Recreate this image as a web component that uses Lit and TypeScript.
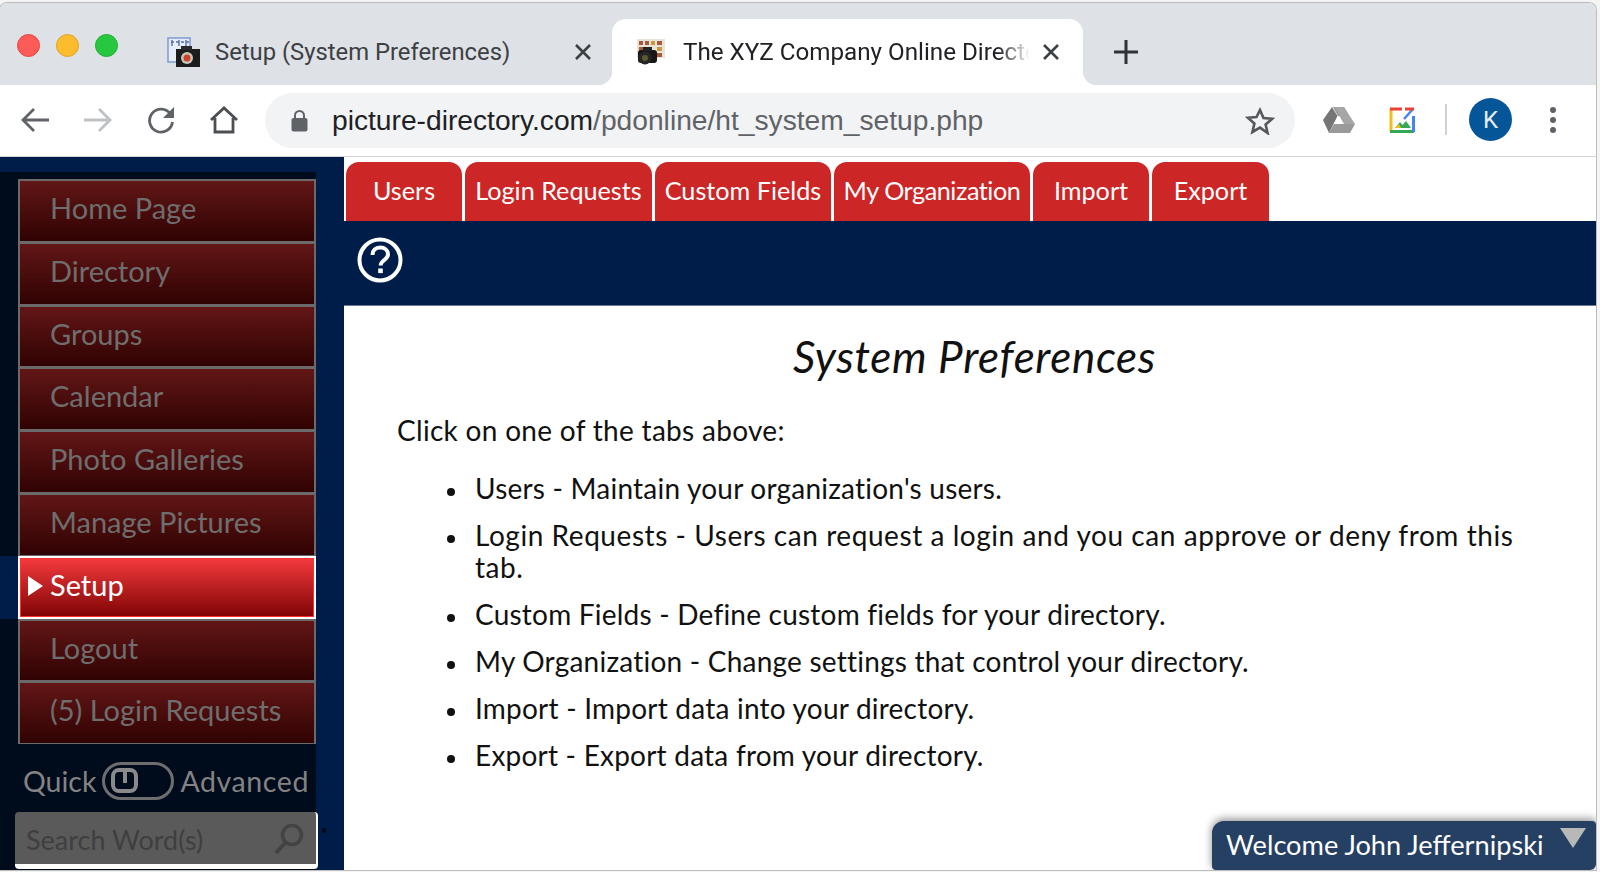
import { LitElement, html, css, svg } from "lit";
import { customElement } from "lit/decorators.js";

const NAV = ["Home Page", "Directory", "Groups", "Calendar", "Photo Galleries", "Manage Pictures", "Setup", "Logout", "(5) Login Requests"];
const TABS: [string, number][] = [["Users", 116], ["Login Requests", 187], ["Custom Fields", 176], ["My Organization", 196], ["Import", 116], ["Export", 117]];
const ITEMS: string[] = [
  "Users - Maintain your organization's users.",
  "Login Requests - Users can request a login and you can approve or deny from this tab.",
  "Custom Fields - Define custom fields for your directory.",
  "My Organization - Change settings that control your directory.",
  "Import - Import data into your directory.",
  "Export - Export data from your directory.",
];

const closeIcon = svg`<svg width="18" height="18" viewBox="0 0 18 18"><path d="M2 2L16 16M16 2L2 16" stroke="#3c4043" stroke-width="2.6"/></svg>`;

@customElement("app-root")
export class AppRoot extends LitElement {
  static styles = css`
    :host { display: block; width: 1600px; height: 872px; overflow: hidden; background: #f4f4f4; }
    .win { width: 1596px; height: 867px; margin-top: 3px; border-radius: 7px 7px 0 0; overflow: hidden; display: flex; flex-direction: column; background: #fff; box-shadow: 0 0 0 1px #bdbdbd; position: relative; }
    .strip { height: 82px; flex: none; background: #dee1e6; display: flex; align-items: flex-end; font-family: "Roboto", "Liberation Sans", sans-serif; }
    .lights { display: flex; gap: 16px; padding: 0 0 28px 17px; width: 147px; box-sizing: border-box; height: 82px; align-items: flex-end; }
    .light { width: 23px; height: 23px; border-radius: 50%; flex: none; box-sizing: border-box; }
    .r { background: #fc5b57; border: 1px solid #e5453f; }
    .y { background: #fdbc2e; border: 1px solid #e0a123; }
    .g { background: #27c840; border: 1px solid #1eae33; }
    .tab { height: 66px; box-sizing: border-box; display: flex; align-items: center; font-size: 24px; color: #3c4043; position: relative; flex: none; }
    .tab1 { width: 465px; padding: 0 0 1px 20px; font-size: 23.8px; }
    .tab1 .title { width: 359px; margin-left: 15px; }
    .tab2 { width: 471px; background: #fff; border-radius: 14px 14px 0 0; padding: 0 24px 1px 24px; color: #202124; font-size: 24.2px; }
    .tab2::before, .tab2::after { content: ""; position: absolute; bottom: 0; width: 14px; height: 14px; }
    .tab2::before { left: -14px; background: radial-gradient(circle at 0 0, transparent 14px, #fff 14.5px); }
    .tab2::after { right: -14px; background: radial-gradient(circle at 100% 0, transparent 14px, #fff 14.5px); }
    .tab2 .title { width: 350px; margin-left: 17px; overflow: hidden; white-space: nowrap; -webkit-mask-image: linear-gradient(to right, #000 90%, transparent 99%); mask-image: linear-gradient(to right, #000 90%, transparent 99%); }
    .tab2 .x { margin-left: 9px; }
    .title { white-space: nowrap; flex: none; }
    .x { display: flex; flex: none; }
    .plus { margin: 0 0 21px 31px; display: flex; }
    .toolbar { height: 72px; flex: none; box-sizing: border-box; background: #fff; border-bottom: 1px solid #d4d6da; display: flex; align-items: center; font-family: "Roboto", "Liberation Sans", sans-serif; padding: 0 0 2px 0; }
    .tool { display: flex; flex: none; align-items: center; justify-content: center; width: 36px; height: 36px; }
    .tools { display: flex; gap: 27px; padding-left: 17px; width: 265px; box-sizing: border-box; }
    .omni { width: 1030px; height: 55px; flex: none; margin-top: 2px; border-radius: 28px; background: #f1f3f4; display: flex; align-items: center; box-sizing: border-box; padding: 0 20px 0 26px; font-size: 28.2px; }
    .url { margin-left: 24px; flex: 1; color: #5f6368; white-space: nowrap; font-family: "Liberation Sans", sans-serif; }
    .url b { color: #202124; font-weight: 400; }
    .ext { display: flex; align-items: center; flex: 1; padding-left: 28px; }
    .sep { width: 2px; height: 31px; background: #cfd1d4; margin: 0 22px 0 30px; }
    .avatar { width: 43px; height: 43px; border-radius: 50%; background: #055699; color: #e8eef5; font-size: 24px; display: flex; align-items: center; justify-content: center; flex: none; }
    .page { flex: 1; min-height: 0; display: flex; font-family: "Lato", "Liberation Sans", sans-serif; position: relative; }
    aside { width: 344px; flex: none; background: #001d4a; padding-top: 15px; box-sizing: border-box; overflow: hidden; }
    .panel { width: 316px; height: 100%; background: #000b1c; padding-top: 7px; box-sizing: border-box; }
    .row { display: block; height: 62.8px; position: relative; }
    .row.sel { background: linear-gradient(to right, #001d4a 18px, transparent 18px); }
    .btn { margin-left: 18px; height: 100%; box-sizing: border-box; border: 2px solid #6a6a6a; border-bottom-width: 1px; background: linear-gradient(#621616, #300202); color: #6e6e6e; font-size: 29px; line-height: 54px; padding-left: 30px; white-space: nowrap; }
    .sel .btn { border: 2px solid #fff; outline: 1px solid #ff3030; outline-offset: -3px; background: linear-gradient(#f53a3e, #7f0404); color: #fff; position: relative; }
    .tri { position: absolute; left: 8px; top: 18px; width: 0; height: 0; border-left: 15px solid #fff; border-top: 10px solid transparent; border-bottom: 10px solid transparent; }
    .switch { display: flex; align-items: center; gap: 6px; padding: 17px 0 0 23px; color: #838383; font-size: 28.5px; height: 40px; }
    .adv { letter-spacing: 0.6px; }
    .track { width: 72px; height: 38px; box-sizing: border-box; border: 3px solid #6e6e6e; border-radius: 19px; padding: 3px 0 0 6px; flex: none; }
    .knob { width: 27px; height: 25px; border: 4px solid #8a8a8a; border-radius: 8px; box-sizing: border-box; display: flex; justify-content: center; align-items: flex-start; }
    .knob i { width: 4px; height: 11px; background: #8a8a8a; display: block; }
    .search { margin: 11px 0 0 15px; width: 303px; height: 57px; box-sizing: border-box; background: #5a5a5a; border-radius: 4px; border-bottom: 5px solid #fff; border-right: 2px solid #fff; display: flex; align-items: center; justify-content: space-between; padding: 2px 12px 0 11px; color: #3f3f3f; font-size: 27px; position: relative; }
    .search::after { content: ""; position: absolute; right: -10px; top: 16px; width: 4px; height: 5px; background: #000b1c; }
    main { flex: 1; min-width: 0; display: flex; flex-direction: column; }
    .tabs { height: 64px; flex: none; display: flex; gap: 3px; padding: 5px 0 0 2px; box-sizing: border-box; }
    .rtab { height: 100%; background: #cc2626; color: #fff; border-radius: 13px 13px 0 0; display: flex; align-items: center; justify-content: center; font-size: 25.2px; padding-bottom: 4px; box-sizing: border-box; flex: none; white-space: nowrap; }
    .rtab.tight { letter-spacing: -0.45px; }
    .help { height: 85px; flex: none; background: #001d4a; display: flex; align-items: center; padding: 0 0 6px 13px; border-bottom: 1px solid #6b7a90; box-sizing: border-box; }
    h1 { margin: 25px 0 0; text-align: center; font-size: 44px; font-weight: 400; font-style: italic; color: #111; line-height: 50px; padding-left: 9px; letter-spacing: 0.65px; }
    .lead { margin: 31px 0 0 53px; font-size: 28px; line-height: 36px; color: #111; letter-spacing: 0.3px; }
    ul { margin: 25px 0 0; padding: 0 72px 0 131px; list-style: none; color: #111; font-size: 28px; line-height: 31.5px; letter-spacing: 0.22px; }
    li { margin-bottom: 15.5px; position: relative; }
    li.wide { letter-spacing: 0.56px; }
    li::before { content: ""; position: absolute; left: -28px; top: 15px; width: 8px; height: 8px; border-radius: 50%; background: #111; }
    .welcome { position: absolute; right: 0; bottom: 0; width: 384px; height: 49px; box-sizing: border-box; background: #264063; color: #fff; border-radius: 12px 4px 6px 4px; box-shadow: 0 -2px 8px rgba(0,0,0,.45); font-size: 27.2px; display: flex; align-items: center; padding: 0 10px 2px 14px; justify-content: space-between; white-space: nowrap; }
    .wtri { width: 0; height: 0; border-top: 20px solid #b8b8b8; border-left: 13px solid transparent; border-right: 13px solid transparent; margin-top: -14px; }
  `;

  render() {
    return html`<div class="win">
      <div class="strip">
        <div class="lights"><span class="light r"></span><span class="light y"></span><span class="light g"></span></div>
        <div class="tab tab1">
          <svg width="33" height="30" viewBox="0 0 33 30" style="flex:none"><rect x="1" y="1" width="22" height="24" fill="#e6ecf8" stroke="#7d9ad6" stroke-width="1.5"/><path d="M4 5h3M9 5h3M14 5h3M19 5h3M5 3v6M12 3v6M19 3v6" stroke="#5a6fa8" stroke-width="1.4"/><rect x="9" y="12" width="24" height="18" fill="#1c1c1c"/><rect x="14" y="9" width="11" height="4" fill="#2a2a2a"/><circle cx="20" cy="21" r="6" fill="#c8c4b8"/><circle cx="20" cy="21" r="3.500" fill="#c8452a"/></svg>
          <span class="title">Setup (System Preferences)</span>
          <span class="x">${closeIcon}</span>
        </div>
        <div class="tab tab2">
          <svg width="30" height="28" viewBox="0 0 30 28" style="flex:none"><rect x="1" y="1" width="28" height="19" fill="#e9e2d6"/><path d="M3 3h4v4H3zM9 3h4v4H9zM15 3h4v4h-4zM21 3h5v4h-5zM3 9h4v4H3zM21 9h5v4h-5zM21 15h5v4h-5z" fill="#a8583c"/><path d="M15 3h4v4h-4zM21 9h5v4h-5z" fill="#c49a3c"/><rect x="2" y="12" width="19" height="13" rx="3" fill="#171717"/><rect x="7" y="9" width="9" height="4" fill="#222"/><circle cx="9" cy="20" r="6.500" fill="#262626"/><circle cx="9" cy="20" r="3" fill="#5d5a2c"/></svg>
          <span class="title">The XYZ Company Online Directory</span>
          <span class="x">${closeIcon}</span>
        </div>
        <div class="plus"><svg width="24" height="24" viewBox="0 0 24 24"><path d="M12 0v24M0 12h24" stroke="#2f3337" stroke-width="3"/></svg></div>
      </div>

      <div class="toolbar">
        <div class="tools">
          <span class="tool"><svg width="30" height="28" viewBox="0 0 30 28" fill="none" stroke="#5f6368" stroke-width="2.8"><path d="M29 14H4M14 3L3 14l11 11"/></svg></span>
          <span class="tool"><svg width="30" height="28" viewBox="0 0 30 28" fill="none" stroke="#bdc1c6" stroke-width="2.8"><path d="M1 14h25M16 3l11 11-11 11"/></svg></span>
          <span class="tool"><svg width="30" height="30" viewBox="0 0 30 30" fill="none"><path d="M24.500 9A11.500 11.500 0 1 0 26.500 17" stroke="#5f6368" stroke-width="2.8"/><path d="M28 2v11H17z" fill="#5f6368"/></svg></span>
          <span class="tool"><svg width="30" height="28" viewBox="0 0 30 28" fill="none" stroke="#4b4f54" stroke-width="2.8" stroke-linejoin="miter"><path d="M2 14L15 2l13 12M6 12v14h18V12"/></svg></span>
        </div>
        <div class="omni">
          <svg width="17" height="23" viewBox="0 0 17 23" style="flex:none"><path d="M4 10V6.500a4.500 4.500 0 0 1 9 0V10" fill="none" stroke="#5f6368" stroke-width="2"/><rect x="0.500" y="9" width="16" height="13.500" rx="2" fill="#5f6368"/></svg>
          <span class="url"><b>picture-directory.com</b>/pdonline/ht_system_setup.php</span>
          <svg width="30" height="28" viewBox="0 0 30 28" style="flex:none"><path d="M15 3l3.500 8 8.700.8-6.600 5.700 2 8.500L15 20.600 7.400 25l2-8.500-6.600-5.700 8.700-.8z" fill="none" stroke="#55585c" stroke-width="2.6"/></svg>
        </div>
        <div class="ext">
          <svg width="32" height="28" viewBox="0 0 32 28" style="flex:none"><path d="M10 1h11l5 9H15z" fill="#8f8f8f"/><path d="M21 1l11 17H21L11 1z" fill="#a6a6a6"/><path d="M0 14L9 1l5.500 9L6 27z" fill="#767676"/><path d="M6 27l5-9h21l-5 9z" fill="#9a9a9a"/><path d="M12 18l4-7 4 7z" fill="#fff"/></svg>
          <svg width="26" height="26" viewBox="0 0 26 26" fill="none" style="flex:none;margin-left:34px"><path d="M2 25V2" stroke="#f6bd16" stroke-width="3"/><path d="M1 2h12" stroke="#ea4335" stroke-width="3"/><path d="M1 24.500h24" stroke="#34a853" stroke-width="3"/><path d="M24.500 25V9" stroke="#4285f4" stroke-width="3"/><path d="M15 12L24 2" stroke="#4285f4" stroke-width="2.500"/><path d="M16 2h9" stroke="#ea4335" stroke-width="3"/><path d="M6 21l5-6 2.500 3 3.500-4 5 7z" fill="#34a853"/><path d="M6 21l4-4 2 4z" fill="#f6bd16"/></svg>
          <span class="sep"></span>
          <span class="avatar">K</span>
          <svg width="8" height="28" viewBox="0 0 8 28" style="flex:none;margin-left:37px"><circle cx="4" cy="4" r="3" fill="#5f6368"/><circle cx="4" cy="14" r="3" fill="#5f6368"/><circle cx="4" cy="24" r="3" fill="#5f6368"/></svg>
        </div>
      </div>

      <div class="page">
        <aside>
          <div class="panel">
            ${NAV.map((n) => html`<div class="row ${n === "Setup" ? "sel" : ""}"><div class="btn">${n === "Setup" ? html`<span class="tri"></span>` : ""}${n}</div></div>`)}
            <div class="switch"><span>Quick</span><span class="track"><span class="knob"><i></i></span></span><span class="adv">Advanced</span></div>
            <div class="search"><span>Search Word(s)</span>
              <svg width="30" height="32" viewBox="0 0 30 32" fill="none" stroke="#434343" stroke-width="3.500"><circle cx="18" cy="12" r="9.500"/><path d="M11 20L2 30" stroke-width="4"/></svg>
            </div>
          </div>
        </aside>
        <main>
          <div class="tabs">${TABS.map(([t, w]) => html`<div class="rtab ${t === "My Organization" ? "tight" : ""}" style="width:${w}px">${t}</div>`)}</div>
          <div class="help"><svg width="46" height="46" viewBox="0 0 46 46" fill="none"><circle cx="23" cy="23" r="20.500" stroke="#fff" stroke-width="4"/><path d="M15.500 18c0-4.500 3.200-7.500 7.700-7.500 4.600 0 7.800 2.800 7.800 6.800 0 5.700-7.300 5.700-7.300 11.200" stroke="#fff" stroke-width="4"/><rect x="21.200" y="31.500" width="4.600" height="4.600" fill="#fff"/></svg></div>
          <h1>System Preferences</h1>
          <p class="lead">Click on one of the tabs above:</p>
          <ul>${ITEMS.map((i) => html`<li class=${i.startsWith("Login") ? "wide" : ""}>${i}</li>`)}</ul>
        </main>
        <div class="welcome"><span>Welcome John Jeffernipski</span><span class="wtri"></span></div>
      </div>
    </div>`;
  }
}
